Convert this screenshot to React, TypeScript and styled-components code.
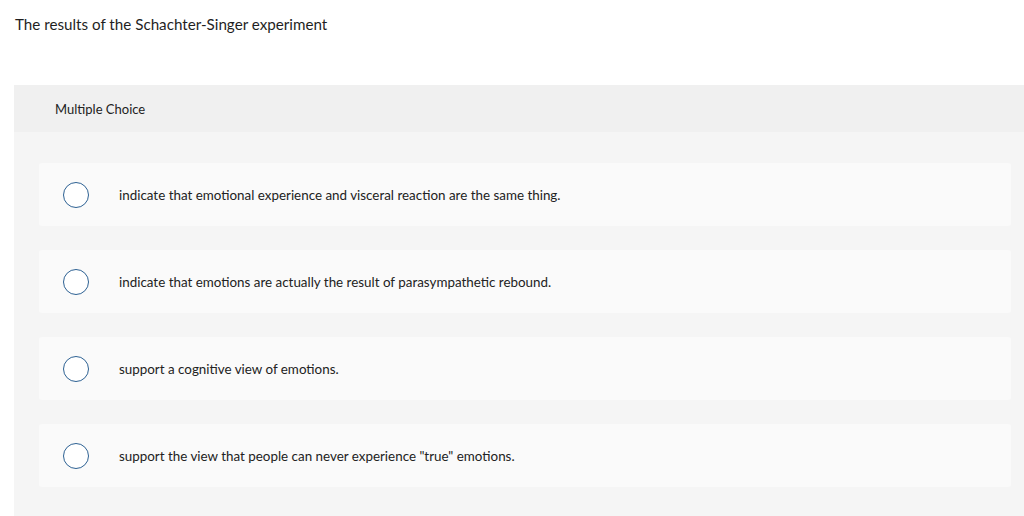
import styled, { createGlobalStyle } from "styled-components";

const GlobalStyle = createGlobalStyle`
  html, body {
    margin: 0;
    padding: 0;
    background: #ffffff;
    overflow: hidden;
  }
  body {
    font-family: "Lato", "Liberation Sans", sans-serif;
    color: #222222;
  }
`;

const Page = styled.div`
  width: 1024px;
  height: 516px;
  overflow: hidden;
`;

const Prompt = styled.p`
  margin: 0;
  padding: 15px 0 0 15px;
  height: 85px;
  box-sizing: border-box;
  font-size: 15.2px;
  line-height: 19px;
  color: #1f1f1f;
`;

const Panel = styled.section`
  margin-left: 14px;
  background: #f5f5f5;
`;

const PanelHeader = styled.div`
  height: 47px;
  background: #f0f0f0;
  display: flex;
  align-items: center;
  padding-left: 41px;
  font-size: 13px;
  color: #222222;
`;

const Choices = styled.div`
  display: flex;
  flex-direction: column;
  gap: 24px;
  padding: 31px 13px 40px 25px;
`;

const Choice = styled.label`
  height: 63px;
  display: flex;
  align-items: center;
  background: #fafafa;
  border-radius: 3px;
  padding-left: 24px;
  cursor: pointer;
`;

const Radio = styled.span`
  width: 24px;
  height: 24px;
  border: 1.3px solid #2d6193;
  border-radius: 50%;
  background: #ffffff;
  flex-shrink: 0;
`;

const ChoiceText = styled.span`
  margin-left: 30px;
  font-size: 13.4px;
  color: #222222;
`;

const choices = [
  "indicate that emotional experience and visceral reaction are the same thing.",
  "indicate that emotions are actually the result of parasympathetic rebound.",
  "support a cognitive view of emotions.",
  'support the view that people can never experience "true" emotions.',
];

export default function App() {
  return (
    <Page>
      <GlobalStyle />
      <Prompt>The results of the Schachter-Singer experiment</Prompt>
      <Panel>
        <PanelHeader>Multiple Choice</PanelHeader>
        <Choices>
          {choices.map((c) => (
            <Choice key={c}>
              <Radio />
              <ChoiceText>{c}</ChoiceText>
            </Choice>
          ))}
        </Choices>
      </Panel>
    </Page>
  );
}
